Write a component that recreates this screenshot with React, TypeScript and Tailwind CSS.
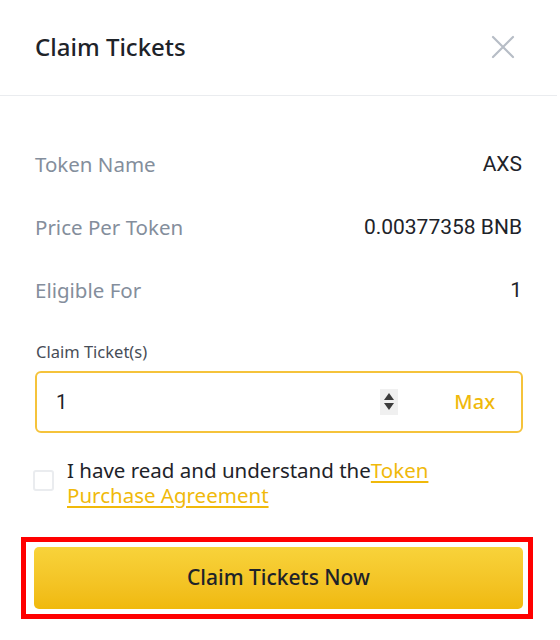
import React, { useState } from 'react';

const label = "font-['Noto_Sans','Open_Sans',sans-serif]";
const num = "font-['Roboto','Liberation_Sans',sans-serif]";

export default function App() {
  const [count, setCount] = useState('1');
  const [agreed, setAgreed] = useState(false);

  const rows = [
    { name: 'Token Name', value: 'AXS' },
    { name: 'Price Per Token', value: '0.00377358 BNB' },
    { name: 'Eligible For', value: '1' },
  ];

  return (
    <div className={`w-[560px] h-[640px] bg-white ${label}`}>
      {/* Header */}
      <div className="w-[557px] h-[96px] flex items-center justify-between pl-[35px] pr-[42px] border-b border-[#eaecef]">
        <h2 className="text-[24px] font-medium text-[#1e2329] -mt-[1px]">Claim Tickets</h2>
        <button className="text-[#b7bdc6] -mt-[2px]">
          <svg width="24" height="24" viewBox="0 0 24 24" fill="none" stroke="currentColor" strokeWidth="2.2" strokeLinecap="round">
            <path d="M2 2L22 22M22 2L2 22" />
          </svg>
        </button>
      </div>

      <div className="px-[35px] pt-[55px]">
        {/* Details */}
        <div className="flex flex-col gap-[36px]">
          {rows.map((r) => (
            <div key={r.name} className="flex items-center justify-between h-[27px]">
              <span className="text-[20.5px] text-[#848e9c]">{r.name}</span>
              <span className={`text-[21px] text-[#1e2329] mr-[3px] ${num}`}>{r.value}</span>
            </div>
          ))}
        </div>

        {/* Input */}
        <div className="mt-[36px]">
          <label className="block text-[16.5px] text-[#474d57] pl-px">Claim Ticket(s)</label>
          <div className="mt-[6px] w-[488px] h-[62px] flex items-center border-2 border-[#f5c33b] rounded-[6px] pl-[19px] pr-[26px]">
            <input
              value={count}
              onChange={(e) => setCount(e.target.value)}
              className={`flex-1 min-w-0 outline-none text-[20px] text-[#1e2329] bg-transparent ${num}`}
            />
            <div className="w-[18px] h-[26px] bg-[#f0f0f0] flex flex-col items-center justify-center gap-[3px]">
              <svg width="10" height="7" viewBox="0 0 10 7"><path d="M5 0L10 7H0Z" fill="#3c3c3c" /></svg>
              <svg width="10" height="7" viewBox="0 0 10 7"><path d="M0 0H10L5 7Z" fill="#3c3c3c" /></svg>
            </div>
            <span className="ml-[56px] text-[20px] font-medium text-[#f0b90b]">Max</span>
          </div>
        </div>

        {/* Agreement */}
        <div className="mt-[25px] flex items-start gap-[13px] -ml-[2px]">
          <button
            onClick={() => setAgreed(!agreed)}
            className={`mt-[12px] w-[21px] h-[21px] shrink-0 rounded-[3px] border-2 ${agreed ? 'bg-[#f0b90b] border-[#f0b90b]' : 'border-[#eaecef] bg-white'}`}
          />
          <p className="w-[420px] text-[20.5px] leading-[25px] text-[#1e2329]">
            I have read and understand the<a href="#" className="text-[#f0b90b] underline underline-offset-[3px]">Token Purchase Agreement</a>
          </p>
        </div>
      </div>

      {/* Button with highlight frame */}
      <div className="mt-[29px] ml-[21px] w-[512px] h-[82px] border-[5px] border-[#ff0000] pt-[5px] pl-[8px] pr-[5px] pb-[5px]">
        <button className="w-full h-full rounded-[5px] bg-gradient-to-b from-[#f8d33a] to-[#f0b90b] text-[21px] font-medium text-[#1e2329]">
          Claim Tickets Now
        </button>
      </div>
    </div>
  );
}
